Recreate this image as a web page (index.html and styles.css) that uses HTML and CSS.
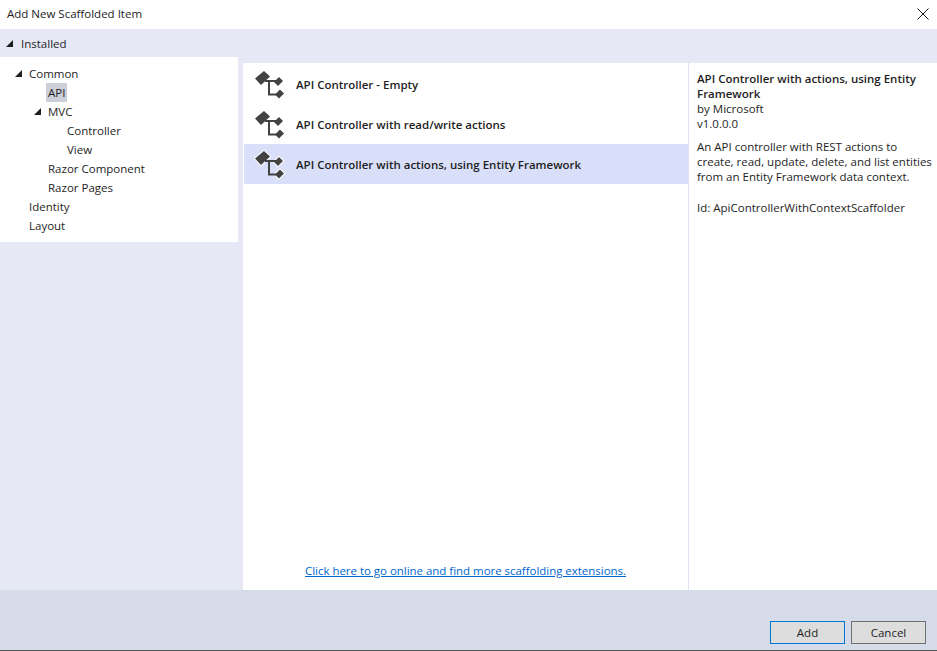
FILE: index.html
```html
<!DOCTYPE html>
<html lang="en">
<head>
<meta charset="utf-8">
<title>Add New Scaffolded Item</title>
<link rel="stylesheet" href="styles.css">
</head>
<body>
<svg class="defs" width="0" height="0" aria-hidden="true">
  <symbol id="api" viewBox="0 0 40 40">
    <path d="M5 14.5 14 7 20 12.5 11 21Z"/>
    <path d="M24 18 29 13 33 17 28 22Z"/>
    <path d="M25 30.5 30 25.5 34 29.5 29 34.5Z"/>
    <path class="wire" d="M15 17H26M19 17V30.5H27"/>
  </symbol>
</svg>
<div class="dialog">
  <header class="titlebar">
    <span class="title">Add New Scaffolded Item</span>
    <svg class="close" width="12" height="12" viewBox="0 0 12 12"><path d="M.5.5l11 11M11.5.5l-11 11"/></svg>
  </header>
  <div class="installed"><span class="tri"></span><span>Installed</span></div>
  <main class="body">
    <nav class="side">
      <ul class="tree">
        <li class="node l1"><span class="tri"></span><span class="lab">Common</span></li>
        <li class="node l2"><span class="lab sel">API</span></li>
        <li class="node l2"><span class="tri"></span><span class="lab">MVC</span></li>
        <li class="node l3"><span class="lab">Controller</span></li>
        <li class="node l3"><span class="lab">View</span></li>
        <li class="node l2"><span class="lab">Razor Component</span></li>
        <li class="node l2"><span class="lab">Razor Pages</span></li>
        <li class="node l1"><span class="lab">Identity</span></li>
        <li class="node l1"><span class="lab">Layout</span></li>
      </ul>
    </nav>
    <section class="center">
      <div class="list">
        <div class="row"><svg class="icon"><use href="#api"/></svg><span>API Controller - Empty</span></div>
        <div class="row"><svg class="icon"><use href="#api"/></svg><span>API Controller with read/write actions</span></div>
        <div class="row active"><svg class="icon"><use href="#api"/></svg><span>API Controller with actions, using Entity Framework</span></div>
      </div>
      <a class="online" href="#">Click here to go online and find more scaffolding extensions.</a>
    </section>
    <aside class="detail">
      <h2>API Controller with actions, using Entity<br>Framework</h2>
      <p>by Microsoft</p>
      <p>v1.0.0.0</p>
      <p class="desc">An API controller with REST actions to<br>create, read, update, delete, and list entities<br>from an Entity Framework data context.</p>
      <p class="id">Id: ApiControllerWithContextScaffolder</p>
    </aside>
  </main>
  <footer class="foot">
    <button class="btn primary">Add</button>
    <button class="btn">Cancel</button>
  </footer>
</div>
</body>
</html>
```
FILE: styles.css
```css
* { box-sizing: border-box; }
html, body { margin: 0; height: 100%; }
body { font: 11.5px/15px "Open Sans", "Liberation Sans", sans-serif; color: #1e1e1e; background: #fff; overflow: hidden; }
.defs { display: block; height: 0; }
.dialog { display: flex; flex-direction: column; width: 937px; height: 651px; }

.titlebar { height: 29px; flex: none; display: flex; align-items: center; justify-content: space-between; padding: 0 8px 2px 7px; }
.close { fill: none; stroke: #1e1e1e; stroke-width: 1; }

.tri { display: inline-block; width: 0; height: 0; border-style: solid; border-width: 0 0 7px 7px; border-color: transparent transparent #1e1e1e transparent; }

.installed { height: 28px; flex: none; background: #e6e9f5; display: flex; align-items: center; gap: 8px; padding-left: 6px; }

.body { flex: 1; min-height: 0; display: flex; background: #e6e9f5; }

.side { width: 243px; flex: none; padding-right: 5px; }
.tree { list-style: none; margin: 0; padding: 7px 0; background: #fff; }
.node { height: 19px; display: flex; align-items: center; position: relative; }
.node .tri { position: absolute; top: 6px; }
.l1 { padding-left: 27px; }
.l1 .tri { left: 15px; }
.l2 { padding-left: 46px; }
.l2 .tri { left: 34px; }
.l3 { padding-left: 65px; }
.lab { padding: 1px 2px 0; height: 19px; line-height: 18px; }
.sel { background: #ccced8; }

.center { width: 445px; flex: none; margin-top: 6px; background: #fff; display: flex; flex-direction: column; align-items: center; padding: 1px 0 12px; }
.list { align-self: stretch; flex: 1; }
.row { height: 40px; display: flex; align-items: center; padding-left: 7px; gap: 6px; font-weight: 600; }
.row .icon { width: 40px; height: 40px; fill: #424242; stroke: none; flex: none; }
.wire { fill: none; stroke: #424242; stroke-width: 2; }
.row.active { background: #d9dff8; margin-left: 1px; padding-left: 6px; }
.row.active .icon { stroke: #fff; stroke-width: 2; paint-order: stroke; overflow: visible; }
.online { color: #0066cc; text-decoration: underline; letter-spacing: -0.03px; }

.detail { flex: 1; margin-top: 6px; background: #fff; border-left: 1px solid #dfe3f1; padding: 8px 8px 0; white-space: nowrap; }
.detail h2 { margin: 0; font: inherit; font-weight: 600; }
.detail p { margin: 0; }
.detail .desc { margin-top: 8px; }
.detail .id { margin-top: 16px; }

.foot { height: 61px; flex: none; background: #d5dbe9; border-bottom: 1px solid #555; display: flex; justify-content: flex-end; align-items: flex-end; gap: 6px; padding: 0 11px 6px 0; }
.btn { width: 75px; height: 23px; padding: 0; background: #dddddd; border: 1px solid #707070; font: inherit; color: #1e1e1e; }
.btn.primary { border-color: #0078d7; }
```
